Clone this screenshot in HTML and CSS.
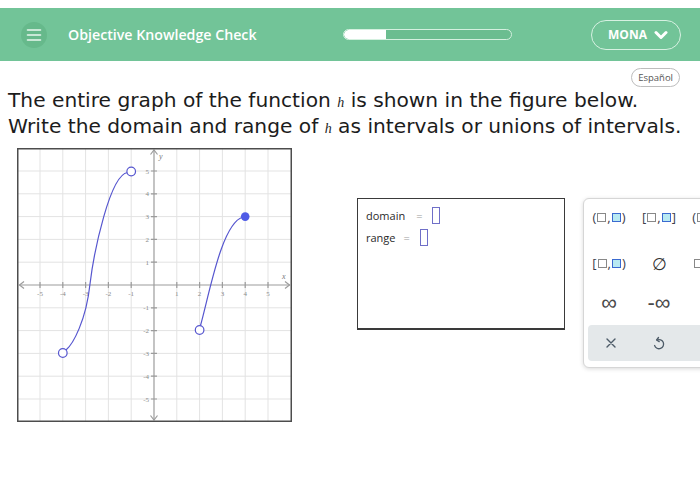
FILE: index.html
```html
<!DOCTYPE html>
<html lang="en">
<head>
<meta charset="utf-8">
<title>Objective Knowledge Check</title>
<link rel="stylesheet" href="styles.css">
</head>
<body>
<header class="topbar">
  <span class="menu">
    <svg width="16" height="12" viewBox="0 0 16 12"><g stroke="#e9f7ef" stroke-width="1.6" stroke-linecap="round"><line x1="1.5" y1="1" x2="14.5" y2="1"/><line x1="1.5" y1="6" x2="14.5" y2="6"/><line x1="1.5" y1="11" x2="14.5" y2="11"/></g></svg>
  </span>
  <span class="title">Objective Knowledge Check</span>
  <div class="progress"><div class="progress-fill" style="width:25%"></div></div>
  <button class="user">MONA
    <svg width="14" height="10" viewBox="0 0 14 10"><path d="M2 2.5 L7 7.5 L12 2.5" fill="none" stroke="#fff" stroke-width="3" stroke-linecap="round" stroke-linejoin="round"/></svg>
  </button>
</header>

<main class="content">
  <div class="lang-row"><span class="lang">Español</span></div>
  <p class="question">The entire graph of the function <i class="var">h</i> is shown in the figure below.<br>Write the domain and range of <i class="var">h</i> as intervals or unions of intervals.</p>

  <div class="work">
    <svg class="graph" width="275" height="274" viewBox="0 0 275 274">
      <g stroke="#e3e3e3" stroke-width="1">
        <line x1="23" y1="0" x2="23" y2="274"/><line x1="45.8" y1="0" x2="45.8" y2="274"/><line x1="68.6" y1="0" x2="68.6" y2="274"/><line x1="91.4" y1="0" x2="91.4" y2="274"/><line x1="114.2" y1="0" x2="114.2" y2="274"/>
        <line x1="159.8" y1="0" x2="159.8" y2="274"/><line x1="182.6" y1="0" x2="182.6" y2="274"/><line x1="205.4" y1="0" x2="205.4" y2="274"/><line x1="228.2" y1="0" x2="228.2" y2="274"/><line x1="251" y1="0" x2="251" y2="274"/>
        <line y1="23" x1="0" y2="23" x2="275"/><line y1="45.8" x1="0" y2="45.8" x2="275"/><line y1="68.6" x1="0" y2="68.6" x2="275"/><line y1="91.4" x1="0" y2="91.4" x2="275"/><line y1="114.2" x1="0" y2="114.2" x2="275"/>
        <line y1="159.8" x1="0" y2="159.8" x2="275"/><line y1="182.6" x1="0" y2="182.6" x2="275"/><line y1="205.4" x1="0" y2="205.4" x2="275"/><line y1="228.2" x1="0" y2="228.2" x2="275"/><line y1="251" x1="0" y2="251" x2="275"/>
      </g>
      <g stroke="#9c9c9c" stroke-width="1.2" fill="none">
        <line x1="2" y1="137" x2="273" y2="137"/>
        <line x1="137" y1="2" x2="137" y2="272"/>
        <path d="M7 133.5 L2.5 137 L7 140.5"/><path d="M268 133.5 L272.5 137 L268 140.5"/>
        <path d="M133.5 6.5 L137 2 L140.5 6.5"/><path d="M133.5 267.5 L137 272 L140.5 267.5"/>
        <path d="M23 134v6M45.8 134v6M68.6 134v6M91.4 134v6M114.2 134v6M159.8 134v6M182.6 134v6M205.4 134v6M228.2 134v6M251 134v6"/>
        <path d="M134 23h6M134 45.8h6M134 68.6h6M134 91.4h6M134 114.2h6M134 159.8h6M134 182.6h6M134 205.4h6M134 228.2h6M134 251h6"/>
      </g>
      <g class="tick-x" text-anchor="middle">
        <text x="23" y="148">-5</text><text x="45.8" y="148">-4</text><text x="68.6" y="148">-3</text><text x="91.4" y="148">-2</text><text x="114.2" y="148">-1</text>
        <text x="159.8" y="148">1</text><text x="182.6" y="148">2</text><text x="205.4" y="148">3</text><text x="228.2" y="148">4</text><text x="251" y="148">5</text>
      </g>
      <g class="tick-y" text-anchor="end">
        <text x="132" y="25.5">5</text><text x="132" y="48.3">4</text><text x="132" y="71.1">3</text><text x="132" y="93.9">2</text><text x="132" y="116.7">1</text>
        <text x="132" y="162.3">-1</text><text x="132" y="185.1">-2</text><text x="132" y="207.9">-3</text><text x="132" y="230.7">-4</text><text x="132" y="253.5">-5</text>
      </g>
      <text class="axis-name" x="142" y="11">y</text>
      <text class="axis-name" x="265" y="131">x</text>
      <g stroke="#5656cf" stroke-width="1.2" fill="none">
        <path d="M49 202 C56 196 69 173 73 136 C77 103 93 27 110.5 24.5"/>
        <path d="M183.5 177.5 C193 143 205 75 226 69"/>
        <circle cx="114.2" cy="23.5" r="4.3" fill="#fff"/>
        <circle cx="45.8" cy="205" r="4.3" fill="#fff"/>
        <circle cx="182.6" cy="182" r="4.3" fill="#fff"/>
      </g>
      <circle cx="228.2" cy="68.6" r="4.3" fill="#4f5be6"/>
      <rect x="0.75" y="0.75" width="273.5" height="272.5" fill="none" stroke="#4d4d4d" stroke-width="1.5"/>
    </svg>

    <div class="answer">
      <div class="answer-row"><span class="label">domain</span><span class="eq">=</span><span class="slot"></span></div>
      <div class="answer-row"><span class="label">range</span><span class="eq eq-range">=</span><span class="slot"></span></div>
    </div>

    <div class="keypad">
      <div class="keys">
        <span class="key">(<i class="sq"></i>,<i class="sq sq-on"></i>)</span>
        <span class="key">[<i class="sq"></i>,<i class="sq sq-on"></i>]</span>
        <span class="key">(<i class="sq"></i>,<i class="sq sq-on"></i>]</span>
        <span class="key"></span>
        <span class="key">[<i class="sq"></i>,<i class="sq sq-on"></i>)</span>
        <span class="key key-sym">∅</span>
        <span class="key"><i class="sq"></i>∪<i class="sq"></i></span>
        <span class="key"></span>
        <span class="key key-inf">∞</span>
        <span class="key key-inf">-∞</span>
        <span class="key"></span>
        <span class="key"></span>
      </div>
      <div class="actions">
        <span class="act">
          <svg width="12" height="12" viewBox="0 0 12 12"><path d="M2 2 L10 10 M10 2 L2 10" stroke="#4d5b68" stroke-width="1.4" stroke-linecap="round"/></svg>
        </span>
        <span class="act">
          <svg width="14" height="16" viewBox="0 0 14 16"><g fill="none" stroke="#4d5b68" stroke-width="1.3" stroke-linecap="round" stroke-linejoin="round"><path d="M5 5 A4.6 4.6 0 1 1 2.6 10.5"/><path d="M6.5 2.5 L4.6 5 L7.2 6.6"/></g></svg>
        </span>
      </div>
    </div>
  </div>
</main>
</body>
</html>
```

FILE: styles.css
```css
html, body {
  margin: 0;
  padding: 0;
  overflow: hidden;
  background: #ffffff;
}

body {
  width: 700px;
  font-family: "Open Sans", "Liberation Sans", sans-serif;
  color: #222;
}

.topbar {
  margin-top: 8px;
  height: 53px;
  background: #72c498;
  display: flex;
  align-items: center;
  padding: 0 19px 0 21px;
}

.menu {
  width: 26px;
  height: 26px;
  border-radius: 50%;
  background: #66b98b;
  display: flex;
  align-items: center;
  justify-content: center;
}

.title {
  margin-left: 21px;
  color: #ffffff;
  font-size: 14.2px;
  font-weight: 600;
}

.progress {
  margin-left: auto;
  margin-right: 79px;
  width: 167px;
  height: 9px;
  border: 1px solid #d4f0df;
  border-radius: 6px;
  background: #6bbd90;
  overflow: hidden;
}

.progress-fill {
  height: 100%;
  background: #ffffff;
  border-radius: 6px 0 0 6px;
}

.user {
  width: 90px;
  height: 30px;
  border: 1px solid #d7f1e2;
  border-radius: 15px;
  background: transparent;
  color: #ffffff;
  font-family: "Open Sans", sans-serif;
  font-size: 12px;
  font-weight: 700;
  display: flex;
  align-items: center;
  justify-content: center;
  gap: 7px;
  padding: 0 0 0 4px;
}

.content {
  display: block;
}

.lang-row {
  display: flex;
  justify-content: flex-end;
  padding: 7px 20px 0 0;
}

.lang {
  height: 17px;
  padding: 0 6px;
  border: 1px solid #bdbdbd;
  border-radius: 10px;
  font-size: 9.5px;
  line-height: 17px;
  color: #555;
}

.question {
  margin: 0 0 0 8px;
  font-family: "DejaVu Sans", Verdana, sans-serif;
  font-size: 20.2px;
  line-height: 26px;
  color: #1c1c1c;
  white-space: nowrap;
}

.var {
  font-family: "Liberation Serif", serif;
  font-size: 14px;
  line-height: 1;
}

.work {
  display: flex;
  align-items: flex-start;
  margin-top: 9px;
}

.graph {
  display: block;
  margin-left: 17px;
  flex: none;
}

.tick-x text, .tick-y text {
  font-family: "Liberation Serif", serif;
  font-size: 7px;
  fill: #8a8a8a;
}

.axis-name {
  font-family: "Liberation Serif", serif;
  font-style: italic;
  font-size: 8px;
  fill: #777;
}

.answer {
  margin: 50px 0 0 65px;
  width: 208px;
  height: 132px;
  border: 1px solid #3a3a3a;
  border-bottom-width: 2px;
  padding: 6px 0 0 8px;
  box-sizing: border-box;
  flex: none;
}

.answer-row {
  display: flex;
  align-items: center;
  height: 20px;
  margin-bottom: 2px;
  font-size: 11px;
  color: #2a2a2a;
}

.eq {
  color: #9a9a9a;
  margin-left: 11px;
  width: 6px;
}

.eq-range {
  margin-left: 8px;
}

.slot {
  margin-left: 10px;
  width: 6px;
  height: 15px;
  border: 1.5px solid #6f6fc8;
}

.keypad {
  margin: 50px 0 0 18px;
  width: 200px;
  border: 1px solid #d6d6d6;
  border-radius: 6px;
  box-shadow: 0 1px 4px rgba(0, 0, 0, 0.15);
  padding: 0 0 6px 0;
  flex: none;
  background: #fff;
}

.keys {
  display: grid;
  grid-template-columns: repeat(4, 50px);
  grid-template-rows: 36px 56px 24px;
  padding-left: 0;
}

.key {
  display: flex;
  align-items: center;
  justify-content: center;
  font-size: 13px;
  color: #3d3d4a;
  white-space: nowrap;
}

.key-sym {
  font-size: 17px;
  color: #333;
}

.key-inf {
  font-family: "Liberation Sans", sans-serif;
  font-size: 22px;
  line-height: 1;
  color: #4a4a4a;
}

.sq {
  display: inline-block;
  width: 7px;
  height: 7px;
  border: 1px solid #888;
  margin: 0 1px;
}

.sq-on {
  background: #b9eaf2;
  border-color: #3a6ad0;
}

.actions {
  margin: 10px 0 0 4px;
  height: 36px;
  background: #e4e8ea;
  border-radius: 4px 0 0 4px;
  display: grid;
  grid-template-columns: 46px 50px;
  align-items: center;
}

.act {
  display: flex;
  justify-content: center;
  align-items: center;
}
```
